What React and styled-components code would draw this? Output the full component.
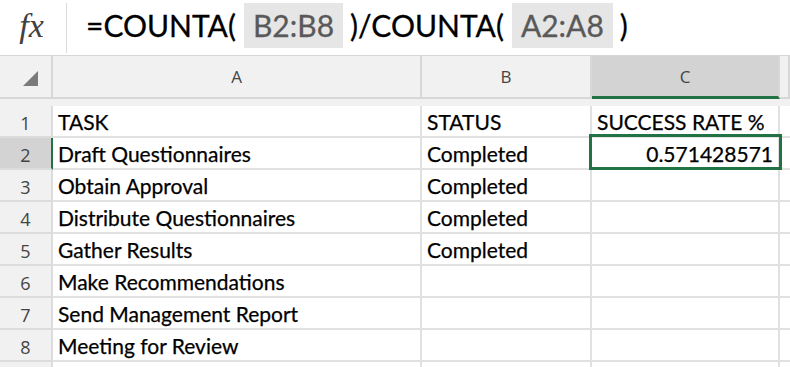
import { Fragment } from "react";
import styled, { createGlobalStyle } from "styled-components";

const GlobalStyle = createGlobalStyle`
  html, body {
    margin: 0;
    padding: 0;
    background: #ffffff;
    overflow: hidden;
  }
  body {
    font-family: Lato, "Liberation Sans", sans-serif;
  }
`;

const GREEN = "#217346";
const LINE = "#e1e1e1";

const tasks = [
  ["TASK", "STATUS", "SUCCESS RATE %"],
  ["Draft Questionnaires", "Completed", "0.571428571"],
  ["Obtain Approval", "Completed", ""],
  ["Distribute Questionnaires", "Completed", ""],
  ["Gather Results", "Completed", ""],
  ["Make Recommendations", "", ""],
  ["Send Management Report", "", ""],
  ["Meeting for Review", "", ""],
  ["", "", ""],
];

const COLS = "53px 369px 170px 188px 1fr";

const Page = styled.div`
  width: 790px;
  height: 367px;
  overflow: hidden;
  background: #fff;
`;

const FormulaBar = styled.div`
  display: flex;
  height: 55px;
  border-bottom: 1px solid #d6d6d6;
`;

const FxLabel = styled.div`
  width: 67px;
  height: 50px;
  margin-top: 3px;
  border-right: 1px solid #dadada;
  display: flex;
  align-items: center;
  justify-content: center;
  padding: 0 3px 5px 0;
  box-sizing: border-box;
  font-family: "Liberation Serif", serif;
  font-style: italic;
  font-size: 34px;
  color: #404040;
`;

const Formula = styled.div`
  display: flex;
  align-items: flex-start;
  padding-left: 19px;
  font-size: 30px;
  color: #000;
  white-space: pre;
  -webkit-text-stroke: 0.3px currentColor;
`;

const Token = styled.span`
  height: 45px;
  margin-top: 3px;
  line-height: 45px;
`;

const RefBox = styled(Token)`
  background: #e6e6e6;
  color: #595959;
  padding: 0 9px;
  margin-left: ${(p) => p.$gap}px;
  margin-right: 7px;
`;

const HeaderRow = styled.div`
  display: grid;
  grid-template-columns: ${COLS};
  height: 43px;
  background: #f1f1f1;
`;

const ColHead = styled.div`
  box-sizing: border-box;
  display: flex;
  align-items: center;
  justify-content: center;
  border-right: 2px solid #d7d7d7;
  border-bottom: ${(p) => (p.$active ? `3px solid ${GREEN}` : "2px solid #d7d7d7")};
  background: ${(p) => (p.$active ? "#d3d3d3" : "transparent")};
  font-family: "Open Sans", sans-serif;
  font-size: 17px;
  color: #444;
`;

const Corner = styled(ColHead)`
  justify-content: flex-end;
  align-items: flex-end;
  padding: 0 13px 11px 0;
`;

const Strip = styled.div`
  height: 7px;
  background: #f1f1f1;
`;

const Body = styled.div`
  display: grid;
  grid-template-columns: ${COLS};
  grid-auto-rows: 32px;
`;

const RowHead = styled.div`
  box-sizing: border-box;
  display: flex;
  align-items: center;
  justify-content: center;
  background: ${(p) => (p.$active ? "#d3d3d3" : "#f1f1f1")};
  border-bottom: 2px solid #dcdcdc;
  border-right: 2px solid ${(p) => (p.$active ? GREEN : "#dcdcdc")};
  font-family: "Open Sans", sans-serif;
  font-size: 18px;
  color: #444;
  padding-top: 3px;
`;

const Cell = styled.div`
  position: relative;
  box-sizing: border-box;
  display: flex;
  align-items: flex-end;
  justify-content: ${(p) => (p.$num ? "flex-end" : "flex-start")};
  border-right: 2px solid ${LINE};
  border-bottom: 2px solid ${LINE};
  padding: 0 5px 2px 5px;
  font-size: 21px;
  color: #000;
  white-space: nowrap;
  -webkit-text-stroke: 0.25px currentColor;

  ${(p) =>
    p.$selected &&
    `
    &::after {
      content: "";
      position: absolute;
      top: -4px;
      left: -3px;
      right: -4px;
      bottom: -2px;
      border: 3px solid ${GREEN};
      z-index: 2;
    }
  `}
`;

const CornerIcon = () => (
  <svg width="15" height="15" viewBox="0 0 15 15">
    <polygon points="15,0 15,15 0,15" fill="#7a7a7a" />
  </svg>
);

export default function App() {
  return (
    <Page>
      <GlobalStyle />
      <FormulaBar>
        <FxLabel>fx</FxLabel>
        <Formula>
          <Token>=COUNTA(</Token>
          <RefBox $gap={8}>B2:B8</RefBox>
          <Token>)/COUNTA(</Token>
          <RefBox $gap={8}>A2:A8</RefBox>
          <Token>)</Token>
        </Formula>
      </FormulaBar>
      <HeaderRow>
        <Corner>
          <CornerIcon />
        </Corner>
        <ColHead>A</ColHead>
        <ColHead>B</ColHead>
        <ColHead $active>C</ColHead>
        <ColHead />
      </HeaderRow>
      <Strip />
      <Body>
        {tasks.map((row, i) => (
          <Fragment key={i}>
            <RowHead $active={i === 1}>{i < 8 ? i + 1 : ""}</RowHead>
            <Cell>{row[0]}</Cell>
            <Cell>{row[1]}</Cell>
            <Cell $num={i === 1} $selected={i === 1}>
              {row[2]}
            </Cell>
            <Cell />
          </Fragment>
        ))}
      </Body>
    </Page>
  );
}
